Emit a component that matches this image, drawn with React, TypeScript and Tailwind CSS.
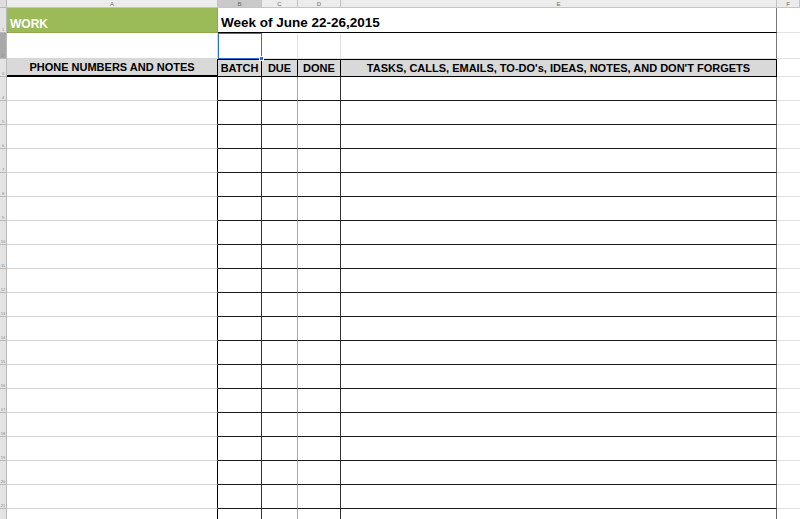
const grid = "grid grid-cols-[7px_211px_44px_36px_43px_436px_23px]"

const colLetters = ["A", "B", "C", "D", "E", "F"]

function RowHead({ n, dark }: { n?: number; dark?: boolean }) {
  return (
    <div
      className={`flex items-end justify-center overflow-hidden border-b border-r border-[#b9b9b9] text-[4px] leading-[5px] text-[#8a8a8a] ${
        dark ? "bg-[#a9a9a9]" : "bg-[#e3e3e3]"
      }`}
    >
      {n}
    </div>
  )
}

export default function App() {
  const dataRows = Array.from({ length: 19 }, (_, i) => i + 4)

  return (
    <div className="h-[519px] w-[800px] overflow-hidden bg-white font-['Liberation_Sans',Arial,sans-serif]">
      {/* column letters */}
      <div className={`${grid} h-[8px]`}>
        <div className="border-b border-r border-[#b9b9b9] bg-[#dedede]" />
        {colLetters.map((c) => (
          <div
            key={c}
            className={`flex items-center justify-center overflow-hidden border-b border-r border-[#c4c4c4] text-[6px] leading-none text-[#6b6b6b] ${
              c === "B" ? "bg-[#c9c9c9]" : "bg-[#ececec]"
            }`}
          >
            {c}
          </div>
        ))}
      </div>

      {/* row 1 */}
      <div className={`${grid} h-[25px]`}>
        <RowHead n={1} />
        <div className="flex items-end border-b border-r border-[#8da94f] bg-[#9bbb59] pb-[2px] pl-[3px] text-[12px] font-bold leading-none text-white">
          WORK
        </div>
        <div className="col-span-4 flex items-end border-b border-r border-b-black border-r-[#777] pb-[3px] pl-[3px] text-[13.5px] font-bold leading-none text-black">
          Week of June 22-26,2015
        </div>
        <div className="border-b border-[#e2e2e2]" />
      </div>

      {/* row 2 */}
      <div className={`${grid} h-[26px]`}>
        <RowHead n={2} dark />
        <div className="border-b border-r border-[#d6d6d6]" />
        <div className="relative border border-[#2f6fd1]">
          <div className="absolute -bottom-[3px] -right-[3px] h-[5px] w-[5px] border border-white bg-[#2f6fd1]" />
        </div>
        <div className="border-b border-r border-[#e2e2e2]" />
        <div className="border-b border-r border-[#e2e2e2]" />
        <div className="border-b border-r border-b-[#e2e2e2] border-r-[#777]" />
        <div className="border-b border-[#e2e2e2]" />
      </div>

      {/* header row */}
      <div className={`${grid} h-[18px]`}>
        <RowHead n={3} />
        <div className="flex items-center justify-center border-b-2 border-r border-b-black border-r-black bg-[#d9d9d9] text-[11px] font-bold leading-none text-black">
          PHONE NUMBERS AND NOTES
        </div>
        <div className="flex items-center justify-center border-y border-r border-black bg-[#d9d9d9] text-[11px] font-bold leading-none text-black">
          BATCH
        </div>
        <div className="flex items-center justify-center border-y border-r border-black bg-[#d9d9d9] text-[11px] font-bold leading-none text-black">
          DUE
        </div>
        <div className="flex items-center justify-center border-y border-r border-black bg-[#d9d9d9] text-[11px] font-bold leading-none text-black">
          DONE
        </div>
        <div className="flex items-center justify-center border-y border-r border-black bg-[#d9d9d9] text-[11px] font-bold leading-none text-black">
          TASKS, CALLS, EMAILS, TO-DO's, IDEAS, NOTES, AND DON'T FORGETS
        </div>
        <div className="border-b border-[#e2e2e2]" />
      </div>

      {/* data rows (last one runs off the bottom edge) */}
      {dataRows.map((n) => (
        <div key={n} className={`${grid} h-[24px]`}>
          <RowHead n={n < 22 ? n : undefined} />
          <div className="border-b border-r border-b-[#d2d2d2] border-r-black" />
          <div className="border-b border-r border-b-[#1a1a1a] border-r-[#333]" />
          <div className="border-b border-r border-b-[#1a1a1a] border-r-[#a8a8a8]" />
          <div className="border-b border-r border-b-[#1a1a1a] border-r-[#333]" />
          <div className="border-b border-r border-b-[#1a1a1a] border-r-[#666]" />
          <div className="border-b border-[#e2e2e2]" />
        </div>
      ))}
    </div>
  )
}
